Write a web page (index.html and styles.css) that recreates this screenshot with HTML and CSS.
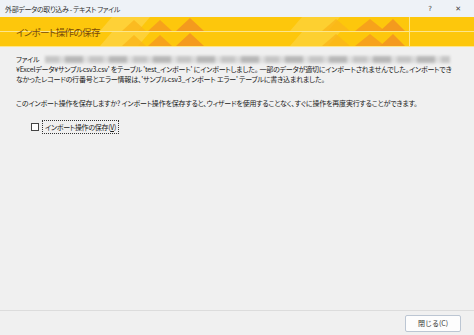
FILE: index.html
```html
<!DOCTYPE html>
<html lang="ja">
<head>
    <meta charset="UTF-8">
    <meta name="viewport" content="width=device-width, initial-scale=1.0">
    <title>外部データの取り込み - テキスト ファイル</title>
    <link rel="stylesheet" href="styles.css">
</head>
<body>
    <div class="window">
        <div class="titlebar">
            <span class="title">外部データの取り込み - テキスト ファイル</span>
            <span class="tb-btn help">?</span>
            <span class="tb-btn close">✕</span>
        </div>
        <div class="banner">
            <svg class="banner-art" width="474" height="30" viewBox="0 0 474 30">
                <rect x="0" y="0" width="474" height="30" fill="#fdc70c"/>
                <!-- light diagonal bands -->
                <polygon points="100,14 112,0 150,0 138,14" fill="#fdd54a" opacity="0.7"/>
                <polygon points="100,29 112,15 150,15 138,29" fill="#fdd54a" opacity="0.7"/>
                <polygon points="290,14 302,0 340,0 328,14" fill="#fdd54a" opacity="0.6"/>
                <polygon points="290,29 302,15 340,15 328,29" fill="#fdd54a" opacity="0.6"/>
                <!-- orange triangles -->
                <polygon points="148,14 160,3 172,14" fill="#f7a21b"/>
                <polygon points="148,29 160,18 172,29" fill="#f7a21b"/>
                <polygon points="176,14 190,1 204,14" fill="#f49a1e"/>
                <polygon points="176,29 190,16 204,29" fill="#f49a1e"/>
                <polygon points="122,14 134,3 146,14" fill="#fab51a" opacity="0.8"/>
                <polygon points="122,29 134,18 146,29" fill="#fab51a" opacity="0.8"/>
                <polygon points="355,14 370,2 385,14" fill="#f7a21b"/>
                <polygon points="355,29 370,17 385,29" fill="#f7a21b"/>
                <polygon points="380,14 393,2 405,14" fill="#f49a1e"/>
                <polygon points="380,29 393,17 405,29" fill="#f49a1e"/>
                <polygon points="322,14 336,2 350,14" fill="#fab51a" opacity="0.8"/>
                <polygon points="322,29 336,17 350,29" fill="#fab51a" opacity="0.8"/>
                <!-- thin light lines -->
                <line x1="0" y1="14.5" x2="474" y2="14.5" stroke="#fde68a" stroke-width="1"/>
                <line x1="0" y1="29.5" x2="474" y2="29.5" stroke="#fde68a" stroke-width="1"/>
                <line x1="409.5" y1="0" x2="409.5" y2="30" stroke="#fde68a" stroke-width="1"/>
            </svg>
            <h1 class="banner-title">インポート操作の保存</h1>
        </div>
        <div class="content">
            <div class="line file-line">
                <span>ファイル</span>
                <span class="blurred"></span>
            </div>
            <p class="line">¥Excelデータ¥サンプルcsv3.csv' をテーブル 'test_インポート' にインポートしました。 一部のデータが適切にインポートされませんでした。インポートでき</p>
            <p class="line">なかったレコードの行番号とエラー情報は、'サンプルcsv3_インポート エラー' テーブルに書き込まれました。</p>
            <p class="line question">このインポート操作を保存しますか? インポート操作を保存すると、ウィザードを使用することなく、すぐに操作を再度実行することができます。</p>
            <label class="check-row">
                <span class="checkbox"></span>
                <span class="check-label">インポート操作の保存(<u>V</u>)</span>
            </label>
        </div>
        <div class="footer">
            <button class="btn">閉じる(C)</button>
        </div>
    </div>
</body>
</html>
```

FILE: styles.css
```css
html, body {
    margin: 0;
    padding: 0;
}
body {
    font-family: "Noto Sans CJK JP", "Noto Sans", sans-serif;
    font-feature-settings: "palt";
    color: #1a1a1a;
    background-color: #f0f0f0;
}
.window {
    width: 474px;
    height: 335px;
    display: flex;
    flex-direction: column;
    background-color: #f0f0f0;
    overflow: hidden;
}
.titlebar {
    height: 17px;
    display: flex;
    align-items: center;
    background-color: #eef2f7;
    font-size: 7px;
    letter-spacing: -0.35px;
    padding-left: 5px;
}
.title {
    flex: 1;
    color: #333;
}
.tb-btn {
    color: #444;
    font-family: "DejaVu Sans", sans-serif;
    font-size: 7px;
    text-align: center;
}
.help {
    width: 28px;
}
.close {
    width: 28px;
    margin-right: 2px;
}
.banner {
    position: relative;
    height: 30px;
}
.banner-art {
    position: absolute;
    left: 0;
    top: 0;
}
.banner-title {
    position: relative;
    margin: 0;
    padding-left: 16px;
    font-size: 9.5px;
    letter-spacing: -0.6px;
    font-weight: normal;
    line-height: 30px;
    color: #7a4b06;
}
.content {
    flex: 1;
    padding: 7px 16px 0 16px;
}
.line {
    margin: 0;
    font-size: 7px;
    letter-spacing: -0.2px;
    line-height: 10px;
    white-space: nowrap;
}
.file-line {
    display: flex;
    align-items: center;
    gap: 6px;
}
.blurred {
    width: 405px;
    height: 7px;
    background: repeating-linear-gradient(90deg, #bbb 0 14px, #d4d4d4 14px 20px, #a9a9a9 20px 38px, #dadada 38px 44px);
    filter: blur(1.5px);
    opacity: 0.8;
}
.question {
    margin-top: 14px;
}
.check-row {
    display: flex;
    align-items: center;
    margin-top: 12px;
    margin-left: 15px;
    font-size: 7px;
    letter-spacing: -0.3px;
}
.checkbox {
    width: 6px;
    height: 6px;
    border: 1px solid #444;
    background: #fff;
    margin-right: 3px;
}
.check-label {
    border: 1px dotted #333;
    padding: 1px 2px;
    line-height: 10px;
}
.footer {
    height: 24px;
    border-top: 1px solid #dcdcdc;
    display: flex;
    align-items: center;
    justify-content: flex-end;
    padding-right: 13px;
}
.btn {
    width: 56px;
    height: 17px;
    background-color: #fdfdfd;
    border: 1px solid #bcc6d3;
    border-radius: 2px;
    font-family: "Noto Sans CJK JP", sans-serif;
    font-size: 7px;
    color: #333;
    padding: 0;
}
```
